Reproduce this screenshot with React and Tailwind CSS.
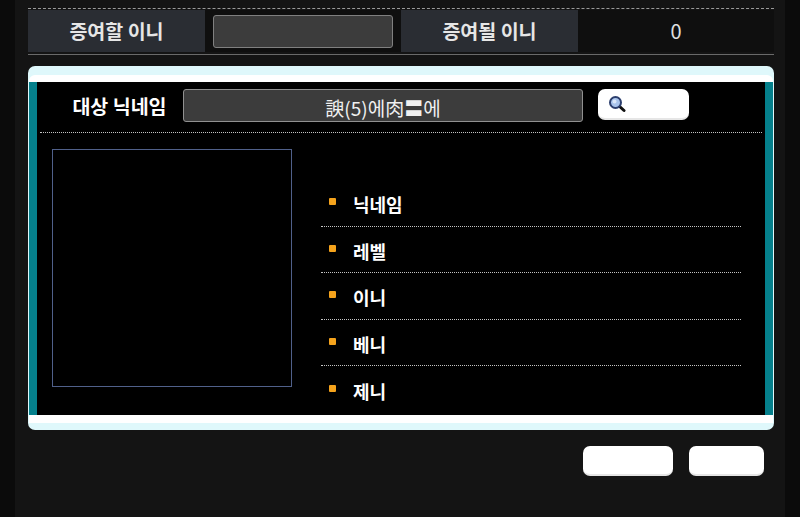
const rows = ["닉네임", "레벨", "이니", "베니", "제니"];

function SearchIcon() {
  return (
    <svg width="18" height="18" viewBox="0 0 18 18">
      <line x1="10" y1="10" x2="16" y2="15.5" stroke="#111" strokeWidth="3" strokeLinecap="round" />
      <circle cx="7.5" cy="7.5" r="5.5" fill="#a9c4ec" stroke="#2c3f6e" strokeWidth="2" />
      <circle cx="6.5" cy="6.5" r="2" fill="#dbe8fa" />
    </svg>
  );
}

function App() {
  return (
    <div className="h-[517px] w-[800px] overflow-hidden bg-[#0b0b0b] px-[15px] font-['Noto_Sans_CJK_KR','Noto_Sans',sans-serif]">
      <div className="h-full bg-[#141414] pl-[13px] pr-[11px] pt-2">
        <div className="border-t border-dashed border-[#9a9a9a]" />
        <div className="mt-[1px] grid h-[45px] grid-cols-[177px_196px_177px_196px] border-b border-[#6a6a6a] pb-[2px]">
          <div className="flex items-center justify-center bg-[#2a2d33] text-[19.5px] font-bold text-[#e6e6e6]">증여할 이니</div>
          <div className="flex items-center justify-center bg-[#0f0f0f]">
            <div className="h-[33px] w-[180px] rounded-[3px] border border-[#808080] bg-[#3c3c3c]" />
          </div>
          <div className="flex items-center justify-center bg-[#2a2d33] text-[19.5px] font-bold text-[#e6e6e6]">증여될 이니</div>
          <div className="flex items-center justify-center bg-[#0f0f0f] text-[20px] text-[#e0e0e0]">0</div>
        </div>

        <div className="mt-[11px] h-[364px] overflow-hidden rounded-[7px] bg-[#dff8fb]">
          <div className="mx-[1px] mt-[9px] h-[7px] rounded-t-[6px] bg-white" />
          <div className="mx-[1px] h-[333px] border-x-[8px] border-[#05808c] bg-black">
            <div className="mx-[3px] flex h-[51px] items-start border-b border-dotted border-[#c4c4c4] pt-[7px]">
              <div className="flex h-[34px] w-[143px] items-center justify-center pl-[16px] text-[19.5px] font-bold text-white">대상 닉네임</div>
              <div className="flex h-[33px] w-[400px] items-center justify-center rounded-[3px] border border-[#909090] bg-[#3c3c3c] pt-[5px] text-[19px] text-[#f0f0f0]">諛(5)에肉〓에</div>
              <div className="ml-[15px] flex h-[31px] w-[91px] items-center rounded-[7px] border-b-2 border-[#e6e6e6] bg-white pl-[10px]">
                <SearchIcon />
              </div>
            </div>

            <div className="flex pl-[15px] pt-[16px]">
              <div className="h-[238px] w-[240px] border border-[#50608a]" />
              <ul className="ml-[29px] mt-[31px] w-[420px]">
                {rows.map((label, i) => (
                  <li
                    key={label}
                    className={`flex h-[46.5px] items-center pl-[8px] pt-[4px] ${i < 4 ? "border-b border-dotted border-[#c4c4c4]" : ""}`}
                  >
                    <span className="mb-[6px] h-[7px] w-[7px] rounded-[1px] bg-[#f5a31c]" />
                    <span className="ml-[17px] text-[18px] font-bold text-white">{label}</span>
                  </li>
                ))}
              </ul>
            </div>
          </div>
          <div className="mx-[1px] h-[8px] bg-white" />
        </div>

        <div className="mt-[16px] flex justify-end gap-[16px] pr-[10px]">
          <div className="h-[30px] w-[90px] rounded-[7px] border-b-2 border-[#e6e6e6] bg-white" />
          <div className="h-[30px] w-[75px] rounded-[7px] border-b-2 border-[#e6e6e6] bg-white" />
        </div>
      </div>
    </div>
  );
}

export default App;
